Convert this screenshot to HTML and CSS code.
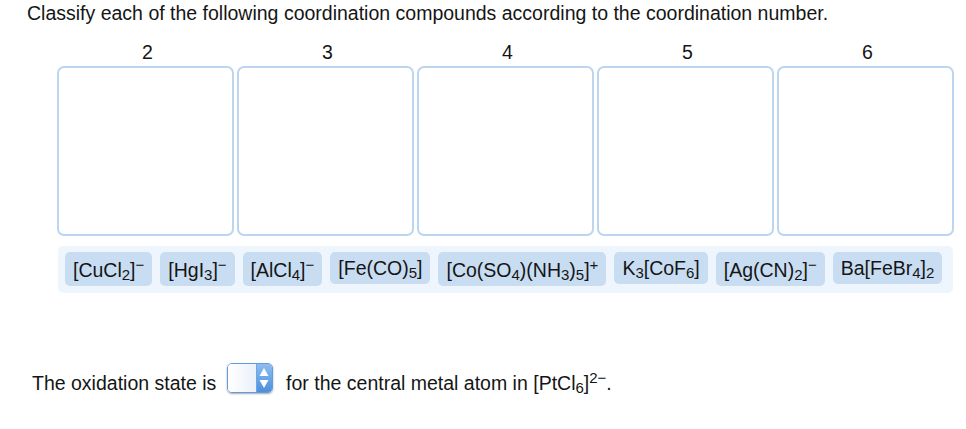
FILE: index.html
```html
<!DOCTYPE html>
<html lang="en">

<head>
  <meta charset="UTF-8">
  <title>Coordination number</title>
  <link rel="stylesheet" href="styles.css">
</head>

<body>
  <p class="prompt">Classify each of the following coordination compounds according to the coordination number.</p>

  <div class="bins">
    <div class="bin-label">2</div>
    <div class="bin-label">3</div>
    <div class="bin-label">4</div>
    <div class="bin-label">5</div>
    <div class="bin-label">6</div>
    <div class="bin"></div>
    <div class="bin"></div>
    <div class="bin"></div>
    <div class="bin"></div>
    <div class="bin"></div>
  </div>

  <div class="tray">
    <span class="tile">[CuCl<sub>2</sub>]<sup>&minus;</sup></span>
    <span class="tile">[HgI<sub>3</sub>]<sup>&minus;</sup></span>
    <span class="tile">[AlCl<sub>4</sub>]<sup>&minus;</sup></span>
    <span class="tile">[Fe(CO)<sub>5</sub>]</span>
    <span class="tile">[Co(SO<sub>4</sub>)(NH<sub>3</sub>)<sub>5</sub>]<sup>+</sup></span>
    <span class="tile">K<sub>3</sub>[CoF<sub>6</sub>]</span>
    <span class="tile">[Ag(CN)<sub>2</sub>]<sup>&minus;</sup></span>
    <span class="tile">Ba[FeBr<sub>4</sub>]<sub>2</sub></span>
  </div>

  <p class="answer">
    The oxidation state is
    <span class="spinner">
      <span class="spinner-field"></span>
      <span class="spinner-arrows">
        <svg width="10" height="22" viewBox="0 0 10 22">
          <path d="M5 1 L9.5 9 L0.5 9 Z" fill="#fff" />
          <path d="M0.5 13 L9.5 13 L5 21 Z" fill="#fff" />
        </svg>
      </span>
    </span>
    for the central metal atom in [PtCl<sub>6</sub>]<sup>2&minus;</sup>.
  </p>
</body>

</html>
```

FILE: styles.css
```css
body {
  margin: 0;
  font-family: 'Liberation Sans', Arial, sans-serif;
  font-size: 19.5px;
  color: #151515;
  background: #fff;
}

.prompt {
  margin: 0;
  padding: 2px 0 0 27px;
  line-height: 23px;
}

/* five drop zones with their coordination numbers */
.bins {
  display: grid;
  grid-template-columns: repeat(5, 177px);
  column-gap: 3px;
  margin: 16px 0 0 57px;
}

.bin-label {
  text-align: center;
  line-height: 22px;
  padding-left: 4px;
  margin-bottom: 3px;
}

.bin {
  height: 166px;
  border: 2px solid #bcd6f1;
  border-radius: 7px;
  background: #fff;
}

.tray {
  display: flex;
  align-items: flex-start;
  gap: 8px;
  width: 882px;
  margin: 10px 0 0 58px;
  padding: 6px 6px 7px 7px;
  background: #eff5fc;
  border-radius: 5px;
}

.tile {
  padding: 4px 8px;
  line-height: 24px;
  background: #c8ddf2;
  border-radius: 5px;
  white-space: nowrap;
}

sub,
sup {
  font-size: 15px;
  line-height: 0;
}

sub {
  vertical-align: -3px;
}

sup {
  vertical-align: 7px;
  line-height: 18px;
}

.answer {
  margin: 70px 0 0 32px;
  line-height: 30px;
}

.spinner {
  display: inline-flex;
  vertical-align: -2px;
  width: 44px;
  height: 28px;
  margin: 0 8px 0 5px;
  border: 1px solid #5e9de0;
  border-radius: 5px;
  overflow: hidden;
  box-shadow: 0 1px 2px rgba(0, 0, 0, 0.35);
}

.spinner-field {
  flex: 1;
  background: linear-gradient(to right, #fff, #eaf1fa);
  border-right: 1px solid #6fa6e3;
}

.spinner-arrows {
  width: 15px;
  display: flex;
  align-items: center;
  justify-content: center;
  background: linear-gradient(to bottom, #8dbdf0, #4b90dd);
}
```
